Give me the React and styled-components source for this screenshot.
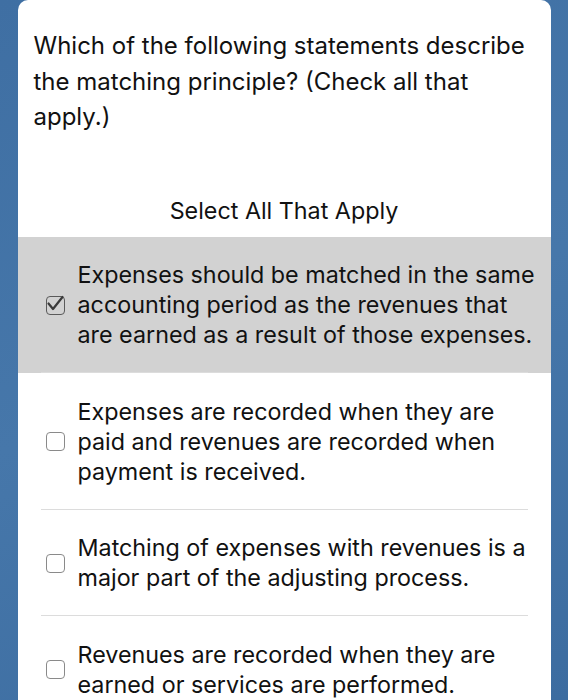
import styled, { createGlobalStyle } from 'styled-components';

const GlobalStyle = createGlobalStyle`
  html, body {
    margin: 0;
    padding: 0;
    height: 100%;
    overflow: hidden;
    background: #4171a4;
  }
  body {
    font-family: Inter, "Liberation Sans", Arial, sans-serif;
    -webkit-font-smoothing: antialiased;
  }
`;

const options = [
  { text: 'Expenses should be matched in the same accounting period as the revenues that are earned as a result of those expenses.', checked: true },
  { text: 'Expenses are recorded when they are paid and revenues are recorded when payment is received.', checked: false },
  { text: 'Matching of expenses with revenues is a major part of the adjusting process.', checked: false },
  { text: 'Revenues are recorded when they are earned or services are performed.', checked: false },
];

const CheckBox = ({ checked }) => (
  <Box $checked={checked}>
    {checked && (
      <CheckMark width="19" height="19" viewBox="0 0 19 19">
        <path d="M3.5 8.5 L8 14 L17.5 2" fill="none" stroke="#3a3a3a" strokeWidth="2.2" strokeLinecap="round" strokeLinejoin="round" />
      </CheckMark>
    )}
  </Box>
);

const App = () => {
  return <StyledPage>
    <GlobalStyle />
    <Card>
      <Question>Which of the following statements describe the matching principle? (Check all that apply.)</Question>
      <Instruction>Select All That Apply</Instruction>
      <OptionList>
        {options.map((o, i) => (
          <Option key={i} $checked={o.checked}>
            <CheckBox checked={o.checked} />
            <OptionText>{o.text}</OptionText>
          </Option>
        ))}
      </OptionList>
    </Card>
  </StyledPage>
};

export default App;

const StyledPage = styled.div`
  width: 568px;
  height: 700px;
  display: flex;
  justify-content: center;
  background: linear-gradient(160deg, #3f6fa3 0%, #4677aa 50%, #3c6ca0 100%);
`;

const Card = styled.section`
  width: 533px;
  height: 760px;
  background: #fff;
  border-radius: 10px 10px 0 0;
  padding-top: 28px;
  box-sizing: border-box;
  display: flex;
  flex-direction: column;
`;

const Question = styled.p`
  margin: 0;
  padding: 0 18px 0 16px;
  font-size: 24px;
  line-height: 35.5px;
  color: #111;
`;

const Instruction = styled.div`
  margin-top: 61px;
  text-align: center;
  font-size: 23.3px;
  line-height: 30px;
  color: #111;
  padding-bottom: 11px;
`;

const OptionList = styled.div`
  display: flex;
  flex-direction: column;
`;

const Option = styled.div`
  position: relative;
  display: flex;
  align-items: center;
  gap: 13px;
  padding: 23.5px 10px 23px 28px;
  background: ${p => p.$checked ? '#d2d2d2' : '#fff'};
  &::after {
    content: '';
    position: absolute;
    left: 23px;
    right: 23px;
    bottom: 0;
    height: 1px;
    background: #dcdcdc;
  }
`;

const Box = styled.span`
  position: relative;
  flex: none;
  width: 19px;
  height: 19px;
  box-sizing: border-box;
  border: 1.5px solid ${p => p.$checked ? '#5a5a5a' : '#8a8a8a'};
  border-radius: 4px;
  background: ${p => p.$checked ? 'transparent' : '#fff'};
`;

const CheckMark = styled.svg`
  position: absolute;
  left: -1.5px;
  top: -1.5px;
  overflow: visible;
`;

const OptionText = styled.span`
  font-size: 23.3px;
  line-height: 30px;
  color: #111;
`;
